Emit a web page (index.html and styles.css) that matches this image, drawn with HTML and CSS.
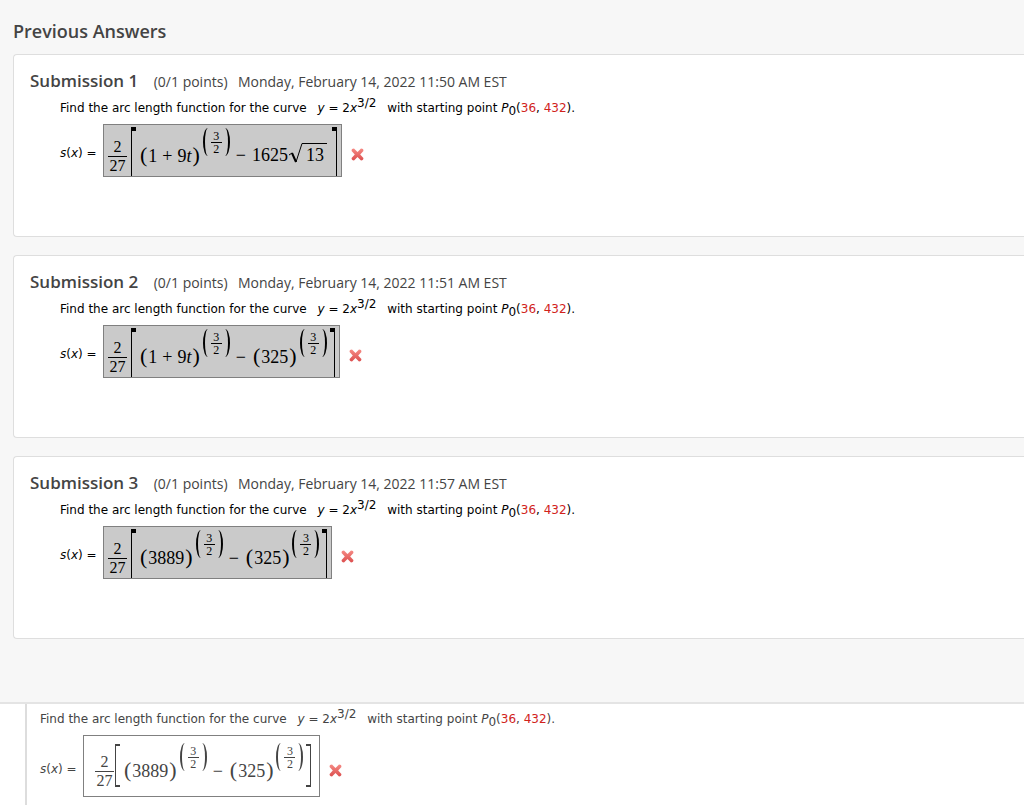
FILE: index.html
```
<!DOCTYPE html>
<html lang="en">
<head>
    <meta charset="UTF-8">
    <meta name="viewport" content="width=device-width, initial-scale=1.0">
    <title>Previous Answers</title>
    <link rel="stylesheet" href="styles.css">
</head>
<body>

<!-- shared red cross -->
<svg width="0" height="0" class="defs">
    <defs>
        <linearGradient id="red" x1="0" y1="0" x2="0" y2="1">
            <stop offset="0" stop-color="#f58a84"/>
            <stop offset="1" stop-color="#dc4f4f"/>
        </linearGradient>
        <symbol id="cross" viewBox="0 0 13 13">
            <path fill="url(#red)" d="M3 0.6 L6.5 3.9 L10 0.6 Q12.6 0.6 12.4 3 L9.2 6.5 L12.4 10 Q12.6 12.4 10 12.4 L6.5 9.1 L3 12.4 Q0.4 12.4 0.6 10 L3.8 6.5 L0.6 3 Q0.4 0.6 3 0.6 Z"/>
        </symbol>
    </defs>
</svg>

<section class="previous">
    <h2>Previous Answers</h2>

    <div class="card">
        <h3>Submission 1 <span class="info">(0/1 points)</span> <span class="date">Monday, February 14, 2022 11:50 AM EST</span></h3>
        <div class="question">
            <p>Find the arc length function for the curve <span class="eq"><i>y</i> = 2<i>x</i><sup>3/2</sup></span> with starting point <i>P</i><sub>0</sub>(<span class="red">36</span>, <span class="red">432</span>).</p>
            <div class="answer">
                <span class="label"><i>s</i>(<i>x</i>) =</span>
                <div class="math">
                    <span class="frac"><span>2</span><span>27</span></span>
                    <span class="bracket left"></span>
                    <span class="term"><b>(</b>1<span class="op">+</span>9<i>t</i><b>)</b></span>
                    <span class="power"><span class="frac"><span>3</span><span>2</span></span></span>
                    <span class="term"><span class="op">−</span>1625</span>
                    <span class="root"><svg width="15" height="22" viewBox="0 0 15 22"><path d="M1 12 L4 10 L8 19 L14 0.5 H15" fill="none" stroke="#000" stroke-width="1"/><path d="M4 10 L8 19" stroke="#000" stroke-width="2"/></svg><span>13</span></span>
                    <span class="bracket right"></span>
                </div>
                <svg class="mark" width="13" height="13"><use href="#cross"/></svg>
            </div>
        </div>
    </div>

    <div class="card">
        <h3>Submission 2 <span class="info">(0/1 points)</span> <span class="date">Monday, February 14, 2022 11:51 AM EST</span></h3>
        <div class="question">
            <p>Find the arc length function for the curve <span class="eq"><i>y</i> = 2<i>x</i><sup>3/2</sup></span> with starting point <i>P</i><sub>0</sub>(<span class="red">36</span>, <span class="red">432</span>).</p>
            <div class="answer">
                <span class="label"><i>s</i>(<i>x</i>) =</span>
                <div class="math">
                    <span class="frac"><span>2</span><span>27</span></span>
                    <span class="bracket left"></span>
                    <span class="term"><b>(</b>1<span class="op">+</span>9<i>t</i><b>)</b></span>
                    <span class="power"><span class="frac"><span>3</span><span>2</span></span></span>
                    <span class="term"><span class="op">−</span><b>(</b>325<b>)</b></span>
                    <span class="power"><span class="frac"><span>3</span><span>2</span></span></span>
                    <span class="bracket right"></span>
                </div>
                <svg class="mark" width="13" height="13"><use href="#cross"/></svg>
            </div>
        </div>
    </div>

    <div class="card">
        <h3>Submission 3 <span class="info">(0/1 points)</span> <span class="date">Monday, February 14, 2022 11:57 AM EST</span></h3>
        <div class="question">
            <p>Find the arc length function for the curve <span class="eq"><i>y</i> = 2<i>x</i><sup>3/2</sup></span> with starting point <i>P</i><sub>0</sub>(<span class="red">36</span>, <span class="red">432</span>).</p>
            <div class="answer">
                <span class="label"><i>s</i>(<i>x</i>) =</span>
                <div class="math">
                    <span class="frac"><span>2</span><span>27</span></span>
                    <span class="bracket left"></span>
                    <span class="term"><b>(</b>3889<b>)</b></span>
                    <span class="power"><span class="frac"><span>3</span><span>2</span></span></span>
                    <span class="term"><span class="op">−</span><b>(</b>325<b>)</b></span>
                    <span class="power"><span class="frac"><span>3</span><span>2</span></span></span>
                    <span class="bracket right"></span>
                </div>
                <svg class="mark" width="13" height="13"><use href="#cross"/></svg>
            </div>
        </div>
    </div>
</section>

<section class="current">
    <div class="question">
        <p>Find the arc length function for the curve <span class="eq"><i>y</i> = 2<i>x</i><sup>3/2</sup></span> with starting point <i>P</i><sub>0</sub>(<span class="red">36</span>, <span class="red">432</span>).</p>
        <div class="answer">
            <span class="label"><i>s</i>(<i>x</i>) =</span>
            <div class="math open">
                <span class="frac"><span>2</span><span>27</span></span>
                <span class="bracket left"></span>
                <span class="term"><b>(</b>3889<b>)</b></span>
                <span class="power"><span class="frac"><span>3</span><span>2</span></span></span>
                <span class="term"><span class="op">−</span><b>(</b>325<b>)</b></span>
                <span class="power"><span class="frac"><span>3</span><span>2</span></span></span>
                <span class="bracket right"></span>
            </div>
            <svg class="mark" width="13" height="13"><use href="#cross"/></svg>
        </div>
    </div>
</section>

</body>
</html>
```
FILE: styles.css
```
* {
    box-sizing: border-box;
}

body {
    margin: 0;
    background-color: #fff;
    color: #444;
    font-family: "Open Sans", sans-serif;
}

.defs {
    position: absolute;
}

/* Previous answers */
.previous {
    padding: 19px 0 45px 13px;
    background-color: #f7f7f7;
    border-bottom: 2px solid #e4e4e4;
}

h2 {
    margin: 0 0 11px;
    font-size: 18px;
    font-weight: 600;
    line-height: 24px;
}

.card {
    margin-bottom: 18px;
    padding: 14px 16px 59px;
    background-color: #fff;
    border: 1px solid #dedede;
    border-right: none;
    border-radius: 4px 0 0 4px;
}

h3 {
    margin: 0 0 3px;
    font-size: 17px;
    font-weight: 600;
    line-height: 24px;
}

.info, .date {
    font-size: 14px;
    font-weight: 400;
}

.info {
    margin-left: 11px;
}

.date {
    margin-left: 6px;
}

/* Question text */
.question {
    font-family: Verdana, "DejaVu Sans", sans-serif;
    font-size: 12px;
}

.card .question {
    padding-left: 30px;
    color: #000;
}

.question p {
    margin: 0 0 5px;
    line-height: 22px;
}

.eq {
    margin: 0 7px;
}

sup, sub {
    font-size: 12px;
    line-height: 0;
}

.red {
    color: #d1231b;
}

.answer {
    display: flex;
    align-items: center;
}

.label {
    width: 43px;
    padding-top: 5px;
}

.mark {
    margin: 8px 0 0 9px;
}

/* Formula box */
.math {
    display: flex;
    align-items: flex-start;
    height: 53px;
    padding: 2px 4px 0;
    font-family: "Liberation Serif", serif;
    font-size: 18px;
    background-color: #cacaca;
    border: 1px solid #808080;
}

.math b {
    margin: 0 1px;
    font-size: 22px;
    font-weight: 400;
}

.frac {
    display: flex;
    flex-direction: column;
    text-align: center;
    font-size: 16px;
    line-height: 18px;
}

.frac span:first-child {
    border-bottom: 1px solid currentColor;
}

.math > .frac {
    width: 19px;
    margin-top: 11px;
}

.bracket {
    width: 5px;
    height: 49px;
    border-top: 4px solid currentColor;
}

.bracket.left {
    margin: 0 3px 0 4px;
    background: linear-gradient(to right, currentColor 1px, transparent 1px);
}

.bracket.right {
    margin-left: 3px;
    background: linear-gradient(to left, currentColor 1px, transparent 1px);
}

.term {
    display: flex;
    align-items: baseline;
    margin-top: 16px;
    line-height: 24px;
}

.op {
    margin: 0 5px;
}

.power + .term .op {
    margin: 0 6px;
}

/* exponent with its tall parentheses */
.power {
    display: flex;
    align-items: center;
    height: 28px;
    margin: 1px 0 0 2px;
}

.power::before, .power::after {
    content: "";
    width: 3px;
    height: 28px;
    border-left: 2px solid currentColor;
    border-radius: 100% 0 0 100% / 50% 0 0 50%;
}

.power::after {
    border-left: none;
    border-right: 2px solid currentColor;
    border-radius: 0 100% 100% 0 / 0 50% 50% 0;
}

.power .frac {
    width: 11px;
    margin: 0 3px;
    font-size: 12px;
    line-height: 12px;
}

.root {
    display: flex;
    margin: 16px 2px 0 0;
}

.root span {
    padding: 0 3px;
    line-height: 22px;
    border-top: 1px solid #000;
}

/* Current question */
.current {
    margin-left: 25px;
    padding: 4px 0 8px 13px;
    border-left: 2px solid #ddd;
}

.math.open {
    height: 62px;
    padding: 6px 8px 0 11px;
    background-color: #fff;
}

.open .bracket {
    height: 43px;
    margin-top: 2px;
    border-top-width: 2px;
    border-bottom: 2px solid currentColor;
}

.open .bracket.left {
    margin: 2px 3px 0 1px;
}
```
